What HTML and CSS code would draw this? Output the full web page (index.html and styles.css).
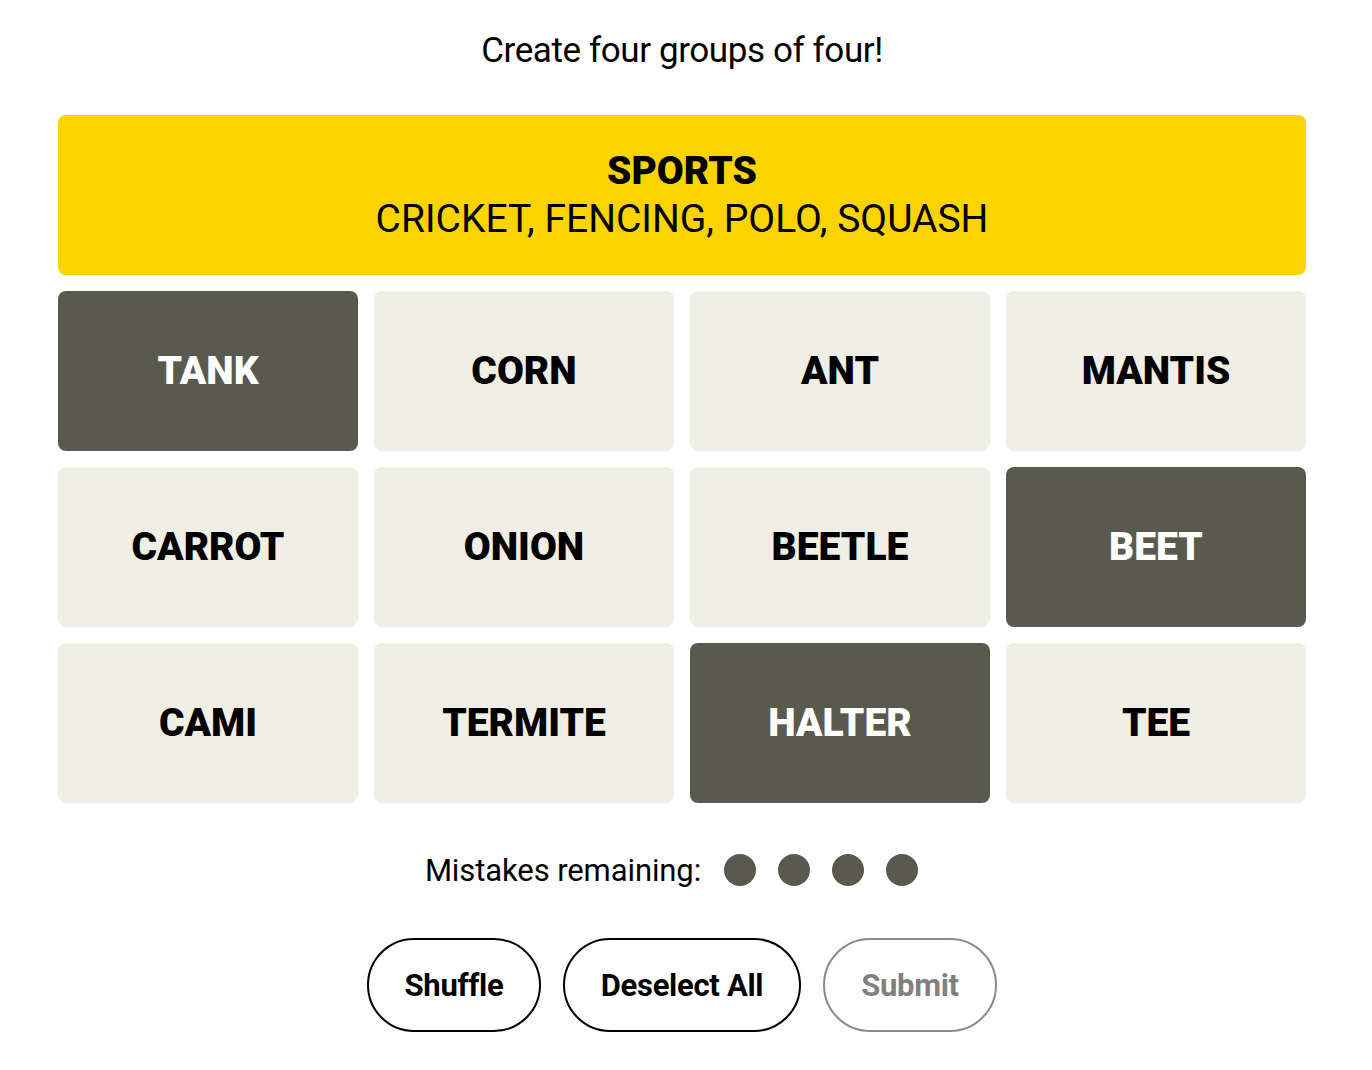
FILE: index.html
```html
<!DOCTYPE html>
<html lang="en">
<head>
<meta charset="utf-8">
<title>Connections</title>
<link rel="stylesheet" href="styles.css">
</head>
<body>
<main class="game">
  <p class="prompt">Create four groups of four!</p>
  <section class="board">
    <div class="solved">
      <h3 class="solved-title">SPORTS</h3>
      <p class="solved-words">CRICKET, FENCING, POLO, SQUASH</p>
    </div>
    <div class="grid">
      <button class="tile selected">TANK</button>
      <button class="tile">CORN</button>
      <button class="tile">ANT</button>
      <button class="tile">MANTIS</button>
      <button class="tile">CARROT</button>
      <button class="tile">ONION</button>
      <button class="tile">BEETLE</button>
      <button class="tile selected">BEET</button>
      <button class="tile">CAMI</button>
      <button class="tile">TERMITE</button>
      <button class="tile selected">HALTER</button>
      <button class="tile">TEE</button>
    </div>
  </section>
  <div class="mistakes">
    <span class="mistakes-label">Mistakes remaining:</span>
    <span class="dots"><span class="dot"></span><span class="dot"></span><span class="dot"></span><span class="dot"></span></span>
  </div>
  <div class="actions">
    <button class="pill shuffle">Shuffle</button>
    <button class="pill deselect">Deselect All</button>
    <button class="pill submit" disabled>Submit</button>
  </div>
</main>
</body>
</html>
```
FILE: styles.css
```css
html, body {
  margin: 0;
  padding: 0;
  background: #ffffff;
}
body {
  font-family: Roboto, "Liberation Sans", sans-serif;
  color: #000;
}
.game {
  width: 1248px;
  margin-left: 58px;
  display: flex;
  flex-direction: column;
  align-items: stretch;
}
.prompt {
  margin: 0;
  padding-top: 30px;
  height: 115px;
  box-sizing: border-box;
  text-align: center;
  font-size: 35px;
  line-height: 42px;
  letter-spacing: -0.4px;
}
.board {
  display: flex;
  flex-direction: column;
  gap: 16px;
}
.solved {
  height: 160px;
  background: #fbd400;
  border-radius: 8px;
  display: flex;
  flex-direction: column;
  align-items: center;
  justify-content: center;
}
.solved-title {
  margin: 0;
  font-size: 39px;
  line-height: 48px;
  font-weight: 900;
  letter-spacing: 0;
}
.solved-words {
  margin: 0;
  font-size: 39px;
  line-height: 48px;
  font-weight: 400;
  letter-spacing: 0;
}
.grid {
  display: grid;
  grid-template-columns: repeat(4, 300px);
  grid-auto-rows: 160px;
  gap: 16px;
}
.tile {
  border: none;
  border-radius: 8px;
  background: #efefe6;
  color: #000;
  font-family: Roboto, "Liberation Sans", sans-serif;
  font-weight: 900;
  font-size: 39px;
  letter-spacing: 0;
  padding: 0;
}
.tile.selected {
  background: #5a594e;
  color: #ffffff;
}
.mistakes {
  margin-top: 47px;
  display: flex;
  justify-content: center;
  align-items: center;
  gap: 23px;
  height: 40px;
  padding-right: 21px;
}
.mistakes-label {
  font-size: 31px;
  letter-spacing: -0.1px;
}
.dots {
  display: flex;
  gap: 22px;
}
.dot {
  width: 32px;
  height: 32px;
  border-radius: 50%;
  background: #5a594e;
}
.actions {
  margin-top: 48px;
  display: flex;
  justify-content: center;
  gap: 22px;
}
.pill {
  height: 94px;
  border: 2px solid #000;
  border-radius: 47px;
  background: #fff;
  color: #000;
  font-family: Roboto, "Liberation Sans", sans-serif;
  font-size: 31px;
  font-weight: 700;
  letter-spacing: -0.3px;
  padding: 0;
}
.shuffle { width: 174px; }
.deselect { width: 238px; }
.submit {
  width: 174px;
  border-color: #8a8a8a;
  color: #808080;
}
```
